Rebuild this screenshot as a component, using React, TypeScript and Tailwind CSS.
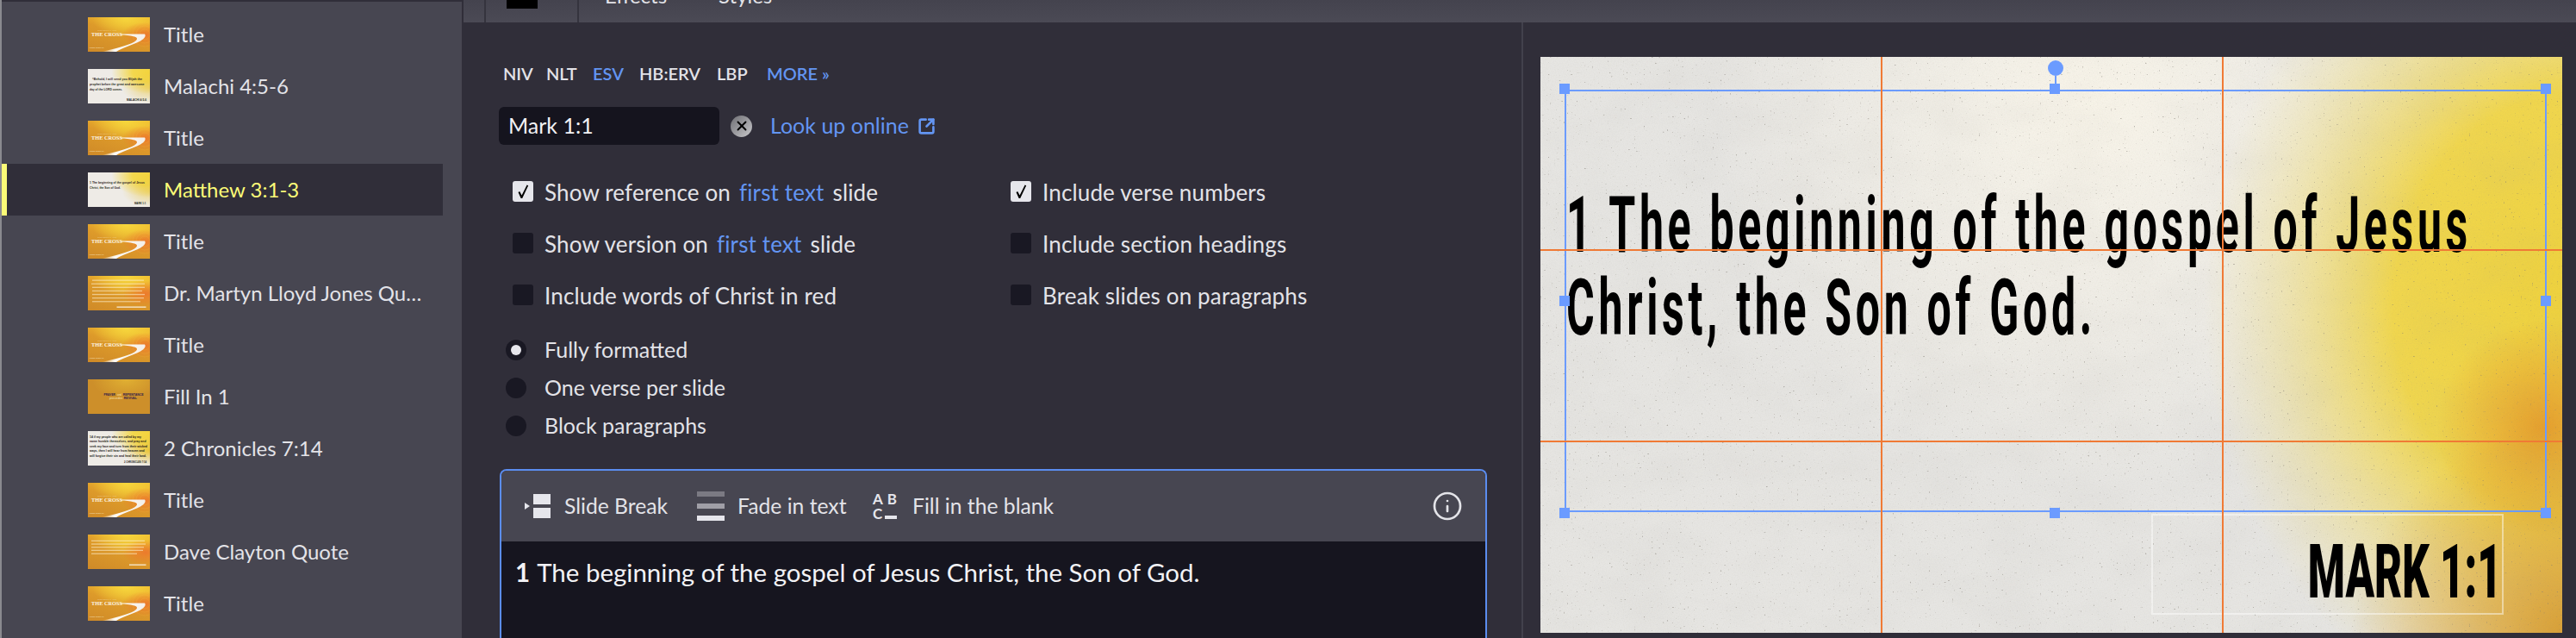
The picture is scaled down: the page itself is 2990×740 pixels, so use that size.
import { Info, SquareArrowOutUpRight, X } from "lucide-react"

type ThumbKind = "title" | "malachi" | "mark" | "lloyd" | "fill" | "chronicles" | "dave"

const slides: { name: string; kind: ThumbKind; active?: boolean }[] = [
    { name: "Title", kind: "title" },
    { name: "Malachi 4:5-6", kind: "malachi" },
    { name: "Title", kind: "title" },
    { name: "Matthew 3:1-3", kind: "mark", active: true },
    { name: "Title", kind: "title" },
    { name: "Dr. Martyn Lloyd Jones Quote", kind: "lloyd" },
    { name: "Title", kind: "title" },
    { name: "Fill In 1", kind: "fill" },
    { name: "2 Chronicles 7:14", kind: "chronicles" },
    { name: "Title", kind: "title" },
    { name: "Dave Clayton Quote", kind: "dave" },
    { name: "Title", kind: "title" },
]

const ThumbDefs = () => (
    <svg className="absolute w-0 h-0">
        <defs>
            <linearGradient id="orangeBase" x1="0" y1="1" x2="0.6" y2="0">
                <stop offset="0" stopColor="#cf8a28" />
                <stop offset="0.6" stopColor="#dd9a2a" />
                <stop offset="1" stopColor="#efb92f" />
            </linearGradient>
            <radialGradient id="sunYellow" cx="0.62" cy="0.02" r="0.55">
                <stop offset="0" stopColor="#f6d63c" />
                <stop offset="1" stopColor="#f6d63c" stopOpacity="0" />
            </radialGradient>
            <radialGradient id="sunOrange" cx="0.93" cy="0.52" r="0.38">
                <stop offset="0" stopColor="#ec7a2c" />
                <stop offset="1" stopColor="#ec7a2c" stopOpacity="0" />
            </radialGradient>
            <linearGradient id="roadFade" x1="0" y1="0" x2="1" y2="0">
                <stop offset="0" stopColor="#fff" stopOpacity="0" />
                <stop offset="0.3" stopColor="#fff" stopOpacity="0.95" />
                <stop offset="1" stopColor="#f4efe8" />
            </linearGradient>
            <radialGradient id="paperYellow" cx="1" cy="0.1" r="0.62">
                <stop offset="0" stopColor="#f3d33c" />
                <stop offset="0.45" stopColor="#f3d84e" />
                <stop offset="1" stopColor="#f3d84e" stopOpacity="0" />
            </radialGradient>
            <radialGradient id="paperYellowLow" cx="1" cy="0.55" r="0.45">
                <stop offset="0" stopColor="#eac63a" />
                <stop offset="1" stopColor="#eac63a" stopOpacity="0" />
            </radialGradient>
        </defs>
    </svg>
)

const OrangeBg = () => (
    <>
        <rect width="72" height="40" fill="url(#orangeBase)" />
        <rect width="72" height="40" fill="url(#sunYellow)" />
        <rect width="72" height="40" fill="url(#sunOrange)" />
    </>
)

const PaperBg = ({ strong }: { strong?: boolean }) => (
    <>
        <rect width="72" height="40" fill="#eeebe6" />
        <rect width="72" height="40" fill="url(#paperYellow)" />
        <rect width="72" height="40" fill="url(#paperYellowLow)" opacity={strong ? 1 : 0.6} />
    </>
)

// tiny squeezed line of slide text: set at a size that fits w, then stretched up to the wanted height
const Tiny = ({ x, y, w, size = 4.2, fill = "#2d2a25", weight = 700, family = "'Liberation Sans', sans-serif", children }: { x: number; y: number; w: number; size?: number; fill?: string; weight?: number; family?: string; children: string }) => {
    const fit = w / (children.length * (children === children.toUpperCase() ? 0.72 : 0.52))
    return (
        <text transform={`translate(${x} ${y}) scale(1 ${size / fit})`} fontSize={fit} fill={fill} fontWeight={weight} fontFamily={family} textLength={w} lengthAdjust="spacingAndGlyphs">{children}</text>
    )
}

const Bars = ({ rows, fill, op }: { rows: [number, number, number][]; fill: string; op: number }) => (
    <g fill={fill} opacity={op}>
        {rows.map(([x, y, w], i) => <rect key={i} x={x} y={y} width={w} height="1.3" />)}
    </g>
)

const Thumb = ({ kind }: { kind: ThumbKind }) => (
    <svg viewBox="0 0 72 40" className="w-[72px] h-[40px] shrink-0">
        {kind === "title" && <>
            <OrangeBg />
            <g fill="none" stroke="#f7c548" strokeOpacity="0.35" strokeWidth="0.5">
                <circle cx="66" cy="20" r="6" /><circle cx="66" cy="20" r="10" /><circle cx="66" cy="20" r="14" />
            </g>
            <path d="M38 19.4 C48 20 58 19 66 19.6 C67.5 21.5 66.5 24.5 61 27.5 C52 32 40 35.5 33 40 L16 40 C30 37 46 33 54 28.5 C58 26 58 23.8 54 22.6 C48 21 44 20.6 38 20.6 Z" fill="url(#roadFade)" />
            <Tiny x={11} y={16} w={22} size={2} weight={400} fill="#f3d9a0" family="'Liberation Serif', serif">JOURNEY TO</Tiny>
            <Tiny x={4} y={22.3} w={36} size={6} fill="#fbf3e3" family="'Liberation Serif', serif">THE CROSS</Tiny>
            <Tiny x={1.5} y={36} w={17.5} size={2.3} weight={400} fill="#f8e6c4" family="'Liberation Serif', serif">Jason Moselle</Tiny>
        </>}
        {kind === "malachi" && <>
            <PaperBg />
            <Tiny x={5} y={13} w={58}>“Behold, I will send you Elijah the</Tiny>
            <Tiny x={2} y={18.7} w={63.5}>prophet before the great and awesome</Tiny>
            <Tiny x={2} y={24.6} w={38}>day of the LORD comes.</Tiny>
            <Tiny x={45} y={36.8} w={23} size={3.4} fill="#221f1a">MALACHI 4:5-6</Tiny>
        </>}
        {kind === "mark" && <>
            <PaperBg />
            <Tiny x={2} y={12.6} w={64}>1 The beginning of the gospel of Jesus</Tiny>
            <Tiny x={2} y={19} w={36}>Christ, the Son of God.</Tiny>
            <Tiny x={54} y={37} w={13.3} size={3.4} fill="#221f1a">MARK 1:1</Tiny>
        </>}
        {kind === "lloyd" && <>
            <OrangeBg />
            <Bars fill="#fff3d6" op={0.55} rows={[[5, 4.5, 60], [4, 8.6, 62], [5, 12.7, 61], [5, 16.8, 58], [5, 20.9, 61], [5, 25, 60], [5, 29.1, 56]]} />
            <Bars fill="#fff" op={0.8} rows={[[33.5, 35.5, 34]]} />
        </>}
        {kind === "fill" && <>
            <rect width="72" height="40" fill="#cd8f2a" />
            <rect width="72" height="40" fill="url(#sunYellow)" opacity="0.45" />
            <Tiny x={18.5} y={19} w={13.5} size={3.3} fill="#32204a">PRAYER</Tiny>
            <Tiny x={34} y={19} w={5} size={3} weight={400} fill="#f6e2ae">and</Tiny>
            <Tiny x={40.7} y={19} w={24} size={3.3} fill="#32204a">REPENTANCE</Tiny>
            <Tiny x={25} y={23.4} w={15.5} size={3} weight={400} fill="#f6e2ae">precedes</Tiny>
            <Tiny x={41.8} y={23.4} w={15} size={3.3} fill="#32204a">REVIVAL</Tiny>
        </>}
        {kind === "chronicles" && <>
            <PaperBg strong />
            <Tiny x={2} y={7.6} w={60} fill="#1f1c18">14 if my people who are called by my</Tiny>
            <Tiny x={2} y={13.3} w={65.5} fill="#1f1c18">name humble themselves, and pray and</Tiny>
            <Tiny x={2} y={18.7} w={67} fill="#1f1c18">seek my face and turn from their wicked</Tiny>
            <Tiny x={2} y={24.3} w={63.7} fill="#1f1c18">ways, then I will hear from heaven and</Tiny>
            <Tiny x={2} y={29.9} w={66} fill="#1f1c18">will forgive their sin and heal their land.</Tiny>
            <Tiny x={42} y={36.6} w={26} size={3} fill="#221f1a">2 CHRONICLES 7:14</Tiny>
        </>}
        {kind === "dave" && <>
            <OrangeBg />
            <Bars fill="#fff3d6" op={0.55} rows={[[4, 6.7, 62], [4, 10.4, 63], [4, 14.1, 61], [4, 17.7, 60], [4, 21.6, 53]]} />
            <Bars fill="#fff" op={0.8} rows={[[48, 34.5, 19.5]]} />
        </>}
    </svg>
)

const SlideRow = ({ name, kind, active }: { name: string; kind: ThumbKind; active?: boolean }) => (
    <div className={`h-[60px] w-[512px] flex items-center border-l-[6px] ${active ? "bg-[#302e39] border-[#fbfb77] text-[#fbfb77]" : "border-transparent text-[#e3e3e8]"}`}>
        <div className="ml-[94px] mr-[16px]"><Thumb kind={kind} /></div>
        <span className="w-[310px] truncate text-[24px]">{name}</span>
    </div>
)

const CheckMark = () => (
    <svg viewBox="0 0 24 24" className="w-[24px] h-[24px]">
        <path d="M6.5 13 L8.2 12 L10.6 16.6 L16.6 4.6 L18.2 5.2 L11.2 20 L9.6 20 Z" fill="#000" />
    </svg>
)

const Check = ({ on, children }: { on?: boolean; children: React.ReactNode }) => (
    <div className="h-[24px] flex items-center gap-[13px]">
        <div className={`w-[24px] h-[24px] rounded-[3px] ${on ? "bg-[#e6e6ec]" : "bg-[#191823]"}`}>{on && <CheckMark />}</div>
        <div className="flex gap-[10px] pt-[2px] text-[26px] tracking-[0.15px] text-[#e3e3e8] whitespace-nowrap">{children}</div>
    </div>
)

const Radio = ({ on, label }: { on?: boolean; label: string }) => (
    <div className="h-[24px] flex items-center gap-[21px]">
        <div className="w-[24px] h-[24px] rounded-full bg-[#191823] flex items-center justify-center">
            {on && <div className="w-[12px] h-[12px] rounded-full bg-[#e6e6ec]" />}
        </div>
        <span className="text-[25px] text-[#e3e3e8]">{label}</span>
    </div>
)

const Link = ({ children }: { children: React.ReactNode }) => <span className="text-[#6395f2]">{children}</span>

const SlideBreakIcon = () => (
    <svg viewBox="0 0 30 28" className="w-[30px] h-[28px]">
        <path d="M0 10 L6 14 L0 18 Z" fill="#e6e6ec" />
        <rect x="10" y="0" width="20" height="12" fill="#e6e6ec" />
        <rect x="10" y="16" width="20" height="12" fill="#e6e6ec" />
    </svg>
)

const FadeIcon = () => (
    <svg viewBox="0 0 32 34" className="w-[32px] h-[34px]">
        <rect y="0" width="32" height="6" fill="#7b7a83" />
        <rect y="14" width="32" height="6" fill="#a09fa7" />
        <rect y="28" width="32" height="6" fill="#e6e6ec" />
    </svg>
)

const BlankIcon = () => (
    <div className="w-[28px] h-[32px] flex flex-col justify-between text-[#e6e6ec] font-bold text-[17px] leading-[15px]">
        <div className="flex justify-between"><span>A</span><span>B</span></div>
        <div className="flex items-end justify-between"><span>C</span><div className="w-[14px] h-[4px] mb-[1px] bg-[#e6e6ec]" /></div>
    </div>
)

const SlideCanvas = () => (
    <div className="relative w-[1186px] h-[668px] shrink-0 overflow-hidden">
        <svg viewBox="0 0 1186 668" className="absolute inset-0 w-full h-full">
            <defs>
                <radialGradient id="cream" gradientUnits="userSpaceOnUse" cx="640" cy="60" r="440">
                    <stop offset="0" stopColor="#f8f4e9" />
                    <stop offset="1" stopColor="#f8f4e9" stopOpacity="0" />
                </radialGradient>
                <radialGradient id="yellowMain" gradientUnits="userSpaceOnUse" cx="1210" cy="290" r="1" gradientTransform="translate(1210 290) scale(440 500) translate(-1210 -290)">
                    <stop offset="0" stopColor="#eed13c" />
                    <stop offset="0.5" stopColor="#f0d64e" />
                    <stop offset="1" stopColor="#f1e08a" stopOpacity="0" />
                </radialGradient>
                <radialGradient id="orangePatch" gradientUnits="userSpaceOnUse" cx="1165" cy="430" r="125">
                    <stop offset="0" stopColor="#e59f2e" />
                    <stop offset="1" stopColor="#e59f2e" stopOpacity="0" />
                </radialGradient>
                <radialGradient id="cornerBr" gradientUnits="userSpaceOnUse" cx="1200" cy="680" r="260">
                    <stop offset="0" stopColor="#d89b2c" />
                    <stop offset="1" stopColor="#d89b2c" stopOpacity="0" />
                </radialGradient>
                <filter id="mottle" x="0" y="0" width="100%" height="100%">
                    <feTurbulence type="fractalNoise" baseFrequency="0.012 0.02" numOctaves="3" seed="4" />
                    <feColorMatrix values="0 0 0 0 0.35  0 0 0 0 0.33  0 0 0 0 0.3  0 0 0 1.1 -0.42" />
                </filter>
                <filter id="grain" x="0" y="0" width="100%" height="100%">
                    <feTurbulence type="fractalNoise" baseFrequency="0.8" numOctaves="2" seed="9" />
                    <feColorMatrix values="0 0 0 0 0.3  0 0 0 0 0.27  0 0 0 0 0.22  0 0 0 0.9 -0.36" />
                </filter>
                <filter id="specks" x="0" y="0" width="100%" height="100%">
                    <feTurbulence type="fractalNoise" baseFrequency="0.45" numOctaves="1" seed="21" />
                    <feColorMatrix values="0 0 0 0 0.22  0 0 0 0 0.2  0 0 0 0 0.17  0 0 0 9 -6.3" />
                </filter>
            </defs>
            <rect width="1186" height="668" fill="#e6e5e2" />
            <rect width="1186" height="668" fill="url(#cream)" />
            <rect width="1186" height="668" fill="url(#yellowMain)" />
            <rect width="1186" height="668" fill="url(#orangePatch)" />
            <rect width="1186" height="668" fill="url(#cornerBr)" />
            <rect width="1186" height="668" filter="url(#mottle)" opacity="0.1" />
            <rect width="1186" height="668" filter="url(#grain)" opacity="0.14" />
            <rect width="1186" height="668" filter="url(#specks)" opacity="0.5" />
        </svg>

        <div className="absolute left-[30px] top-[147px] origin-top-left scale-x-[0.55] text-[91px] leading-[96px] tracking-[8.5px] font-bold text-black whitespace-nowrap font-['Roboto',sans-serif]">
            <div>1 The beginning of the gospel of Jesus</div>
            <div>Christ, the Son of God.</div>
        </div>

        <div className="absolute left-[709px] top-[530px] w-[409px] h-[117px] border-2 border-white/45 flex justify-end">
            <div className="origin-top-right scale-x-[0.56] pt-[15px] text-[88px] leading-[100px] font-black text-black whitespace-nowrap font-['Roboto',sans-serif]">MARK 1:1</div>
        </div>

        {/* selection box */}
        <div className="absolute left-[28px] top-[38px] w-[1140px] h-[490px] border-2 border-[#6b9bff]" />
        <div className="absolute left-[597px] top-[22px] w-[2px] h-[10px] bg-[#6b9bff]" />
        <div className="absolute left-[588.5px] top-[4px] w-[18px] h-[18px] rounded-full bg-[#6b9bff]" />
        <div className="absolute left-[22px] top-[31px] w-[12px] h-[12px] bg-[#6b9bff]" />
        <div className="absolute left-[591px] top-[31px] w-[12px] h-[12px] bg-[#6b9bff]" />
        <div className="absolute left-[1161px] top-[31px] w-[12px] h-[12px] bg-[#6b9bff]" />
        <div className="absolute left-[22px] top-[277px] w-[12px] h-[12px] bg-[#6b9bff]" />
        <div className="absolute left-[1161px] top-[277px] w-[12px] h-[12px] bg-[#6b9bff]" />
        <div className="absolute left-[22px] top-[523px] w-[12px] h-[12px] bg-[#6b9bff]" />
        <div className="absolute left-[591px] top-[523px] w-[12px] h-[12px] bg-[#6b9bff]" />
        <div className="absolute left-[1161px] top-[523px] w-[12px] h-[12px] bg-[#6b9bff]" />

        {/* thirds guides */}
        <div className="absolute left-[395px] top-0 w-[2px] h-full bg-[#f07a35]" />
        <div className="absolute left-[791px] top-0 w-[2px] h-full bg-[#f07a35]" />
        <div className="absolute top-[223px] left-0 h-[2px] w-full bg-[#f07a35]" />
        <div className="absolute top-[445px] left-0 h-[2px] w-full bg-[#f07a35]" />
    </div>
)

export default function App() {
    return (
        <div className="w-[2990px] h-[740px] overflow-hidden flex bg-[#302e39] text-[#e3e3e8] font-['Lato','Noto_Sans',sans-serif]">
            <ThumbDefs />
            <aside className="w-[538px] h-full shrink-0 bg-[#302e39] flex">
                <div className="w-[2px] h-full bg-[#8a8a8f]" />
                <div className="w-[534px] h-full mt-[2px] bg-[#474651] pt-[8px]">
                    {slides.map((s, i) => <SlideRow key={i} {...s} />)}
                </div>
            </aside>

            <main className="flex-1 flex flex-col min-w-0">
                <div className="h-[26px] shrink-0 flex bg-gradient-to-b from-[#44434e] to-[#4b4a55] overflow-hidden">
                    <div className="w-[26px] border-r-2 border-[#35343e]" />
                    <div className="w-[108px] border-r-2 border-[#35343e] pl-[24px]">
                        <div className="w-[36px] h-[10px] bg-black" />
                    </div>
                    <div className="flex gap-[60px] pl-[30px] -mt-[22px] text-[24px] leading-[34px] text-[#e3e3e8]">
                        <span>Effects</span>
                        <span>Styles</span>
                    </div>
                </div>

                <div className="flex-1 flex min-h-0">
                    <section className="w-[1228px] shrink-0 pl-[41px] flex flex-col">
                        <div className="mt-[49px] ml-[5px] h-[20px] flex items-center text-[20px] font-semibold text-[#e3e3e8]">
                            <span className="w-[50px]">NIV</span>
                            <span className="w-[54px]">NLT</span>
                            <span className="w-[54px] text-[#6395f2]">ESV</span>
                            <span className="w-[90px]">HB:ERV</span>
                            <span className="w-[58px]">LBP</span>
                            <span className="text-[#6395f2]">MORE »</span>
                        </div>

                        <div className="mt-[29px] h-[44px] flex items-center">
                            <div className="w-[256px] h-[44px] rounded-[6px] bg-[#15141e] pl-[11px] flex items-center text-[25px] text-[#f2f2f5]">Mark 1:1</div>
                            <div className="ml-[13px] w-[25px] h-[25px] rounded-full bg-gradient-to-br from-[#6f6f74] to-[#c9c9cc] flex items-center justify-center">
                                <X className="w-[18px] h-[18px] text-black" strokeWidth={2.5} />
                            </div>
                            <span className="ml-[21px] text-[25px] text-[#6395f2]">Look up online</span>
                            <SquareArrowOutUpRight className="ml-[10px] w-[21px] h-[21px] text-[#6395f2]" strokeWidth={3} />
                        </div>

                        <div className="mt-[42px] ml-[16px] flex">
                            <div className="w-[578px] flex flex-col gap-[36px]">
                                <Check on><span>Show reference on</span><Link>first text</Link><span>slide</span></Check>
                                <Check><span>Show version on</span><Link>first text</Link><span>slide</span></Check>
                                <Check>Include words of Christ in red</Check>
                            </div>
                            <div className="flex flex-col gap-[36px]">
                                <Check on>Include verse numbers</Check>
                                <Check>Include section headings</Check>
                                <Check>Break slides on paragraphs</Check>
                            </div>
                        </div>

                        <div className="mt-[40px] ml-[8px] flex flex-col gap-[20px]">
                            <Radio on label="Fully formatted" />
                            <Radio label="One verse per slide" />
                            <Radio label="Block paragraphs" />
                        </div>

                        <div className="mt-[38px] ml-[1px] w-[1146px] flex-1 border-2 border-b-0 border-[#5b8def] rounded-t-[8px] overflow-hidden flex flex-col">
                            <div className="h-[82px] shrink-0 bg-[#474651] flex items-center pl-[27px] text-[24.7px] text-[#e3e3e8]">
                                <SlideBreakIcon />
                                <span className="ml-[16px] w-[154px]">Slide Break</span>
                                <FadeIcon />
                                <span className="ml-[15px] w-[157px]">Fade in text</span>
                                <BlankIcon />
                                <span className="ml-[18px]">Fill in the blank</span>
                                <Info className="ml-auto mr-[26px] w-[36px] h-[36px] text-[#e3e3e8]" strokeWidth={1.8} />
                            </div>
                            <div className="flex-1 bg-[#16151f] pl-[16px] pt-[16px] text-[29.5px] leading-[40px] text-[#f2f2f5]">
                                <b className="font-bold mr-[8px]">1</b>The beginning of the gospel of Jesus Christ, the Son of God.
                            </div>
                        </div>
                    </section>

                    <div className="w-[2px] h-full shrink-0 bg-[#42414c]" />

                    <section className="flex-1 pl-[20px] pt-[40px] min-w-0">
                        <SlideCanvas />
                    </section>
                </div>
            </main>
        </div>
    )
}
